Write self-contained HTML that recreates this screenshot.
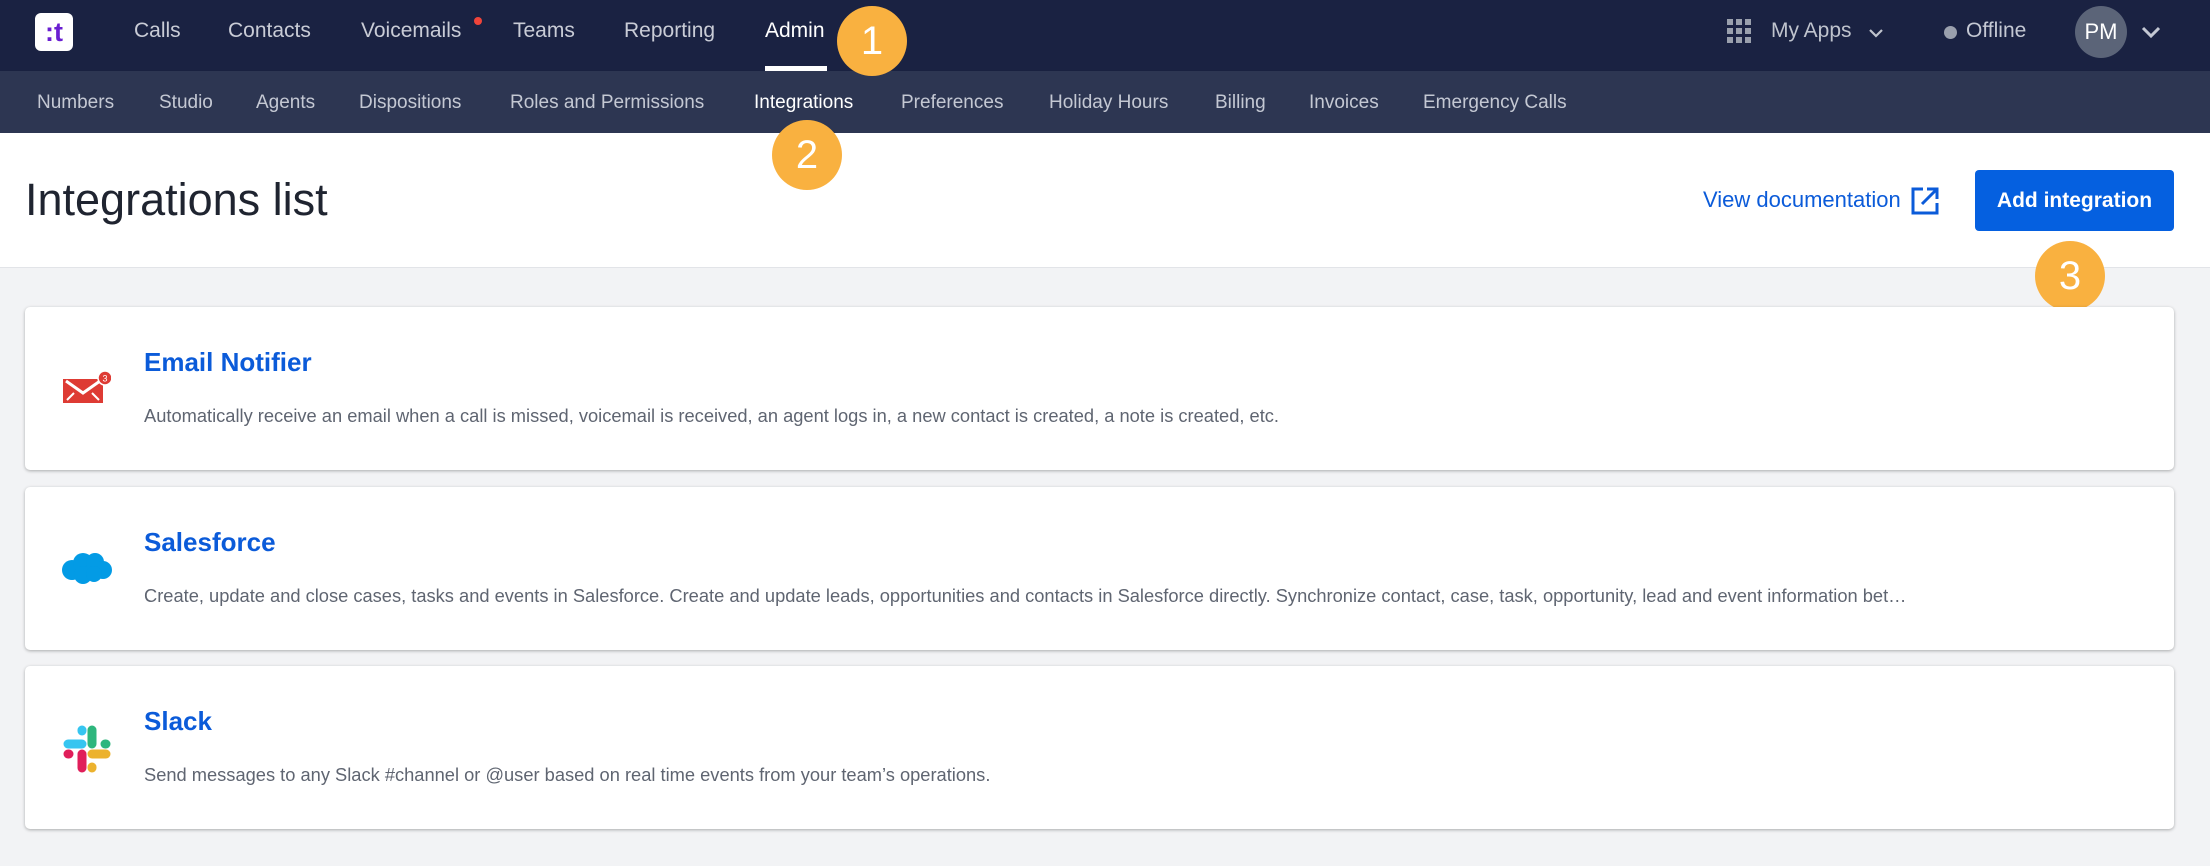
<!DOCTYPE html>
<html><head><meta charset="utf-8"><style>
*{margin:0;padding:0;box-sizing:border-box}
body{width:2210px;height:866px;overflow:hidden;background:#f2f3f5;font-family:"Liberation Sans",sans-serif;position:relative}
.abs{position:absolute;white-space:nowrap}
.top{position:absolute;left:0;top:0;width:2210px;height:71px;background:#1a2242}
.sub{position:absolute;left:0;top:71px;width:2210px;height:62px;background:#2d3652;box-shadow:0 2px 3px rgba(0,0,0,.25)}
.hdr{position:absolute;left:0;top:133px;width:2210px;height:135px;background:#fff;border-bottom:1px solid #e2e4e8}
.nav{font-size:21px;color:#c9ccd6;top:19px}
.snav{font-size:19px;color:#c4c8d3;top:92px}
.circ{position:absolute;width:70px;height:70px;border-radius:50%;background:#f9b140;color:#fff;font-size:40px;text-align:center;line-height:70px}
.card{position:absolute;left:25px;width:2149px;height:163px;background:#fff;border-radius:5px;box-shadow:0 1px 3px rgba(0,0,0,.3)}
.ct{position:absolute;left:119px;top:40px;font-size:26px;font-weight:bold;color:#0b5bd9}
.cd{position:absolute;left:119px;top:98px;font-size:18.3px;color:#5f6571;white-space:nowrap;overflow:hidden;text-overflow:ellipsis;max-width:1768px}
</style></head><body>
<div class="top"></div><div class="sub"></div><div class="hdr"></div>
<div class="abs" style="left:35px;top:13px;width:38px;height:38px;background:#fff;border-radius:6px;color:#6a1fd1;font-weight:bold;font-size:27px;text-align:center;line-height:38px">:t</div>
<div class="abs nav" style="left:134px">Calls</div>
<div class="abs nav" style="left:228px">Contacts</div>
<div class="abs nav" style="left:361px">Voicemails</div>
<div class="abs" style="left:474px;top:17px;width:8px;height:8px;border-radius:50%;background:#f0443a"></div>
<div class="abs nav" style="left:513px">Teams</div>
<div class="abs nav" style="left:624px">Reporting</div>
<div class="abs nav" style="left:765px;color:#fff">Admin</div>
<div class="abs" style="left:765px;top:66px;width:62px;height:5px;background:#fff"></div>
<div class="circ" style="left:837px;top:6px">1</div>
<svg class="abs" style="left:1727px;top:19px" width="25" height="25"><g fill="#9aa0ad"><rect x="0" y="0" width="6" height="6"/><rect x="9" y="0" width="6" height="6"/><rect x="18" y="0" width="6" height="6"/><rect x="0" y="9" width="6" height="6"/><rect x="9" y="9" width="6" height="6"/><rect x="18" y="9" width="6" height="6"/><rect x="0" y="18" width="6" height="6"/><rect x="9" y="18" width="6" height="6"/><rect x="18" y="18" width="6" height="6"/></g></svg>
<div class="abs nav" style="left:1771px;top:19px;color:#bfc3cd">My Apps</div>
<svg class="abs" style="left:1868px;top:28px" width="16" height="10"><path d="M2 2l6 6 6-6" stroke="#bfc3cd" stroke-width="2.2" fill="none"/></svg>
<div class="abs" style="left:1944px;top:26px;width:13px;height:13px;border-radius:50%;background:#9aa0ad"></div>
<div class="abs nav" style="left:1966px;color:#c4c8d3">Offline</div>
<div class="abs" style="left:2075px;top:6px;width:52px;height:52px;border-radius:50%;background:#5b6478;color:#fff;font-size:22px;text-align:center;line-height:52px">PM</div>
<svg class="abs" style="left:2141px;top:26px" width="20" height="13"><path d="M2 2l8 8 8-8" stroke="#c4c8d3" stroke-width="3" fill="none"/></svg>

<div class="abs snav" style="left:37px">Numbers</div>
<div class="abs snav" style="left:159px">Studio</div>
<div class="abs snav" style="left:256px">Agents</div>
<div class="abs snav" style="left:359px">Dispositions</div>
<div class="abs snav" style="left:510px">Roles and Permissions</div>
<div class="abs snav" style="left:754px;color:#fff">Integrations</div>
<div class="abs snav" style="left:901px">Preferences</div>
<div class="abs snav" style="left:1049px">Holiday Hours</div>
<div class="abs snav" style="left:1215px">Billing</div>
<div class="abs snav" style="left:1309px">Invoices</div>
<div class="abs snav" style="left:1423px">Emergency Calls</div>
<div class="circ" style="left:772px;top:120px">2</div>

<div class="abs" style="left:25px;top:174px;font-size:45px;color:#1f2430">Integrations list</div>
<div class="abs" style="left:1703px;top:187px;font-size:22px;color:#0b5bd9">View documentation</div>
<svg class="abs" style="left:1910px;top:186px" width="30" height="30"><path d="M13 3H3v24h24V17" stroke="#0b5bd9" stroke-width="3" fill="none"/><path d="M12 18L26 4M17 3h10v10" stroke="#0b5bd9" stroke-width="3" fill="none"/></svg>
<div class="abs" style="left:1975px;top:170px;width:199px;height:61px;background:#0560e0;border-radius:4px;color:#fff;font-size:21px;font-weight:bold;text-align:center;line-height:61px">Add integration</div>
<div class="circ" style="left:2035px;top:241px">3</div>

<div class="card" style="top:307px">
<svg class="abs" style="left:36px;top:63px" width="50" height="40"><rect x="2" y="9" width="40" height="24" fill="#de3b34"/><path d="M5 11l17 12 17-12" stroke="#fff" stroke-width="3" fill="none"/><path d="M6 30l7-7M38 30l-7-7" stroke="#fff" stroke-width="2"/><circle cx="44" cy="8" r="7" fill="#de3b34" stroke="#fff" stroke-width="1.5"/><text x="44" y="11.5" font-size="9" fill="#fff" text-anchor="middle" font-family="Liberation Sans">3</text></svg>
<div class="ct">Email Notifier</div>
<div class="cd">Automatically receive an email when a call is missed, voicemail is received, an agent logs in, a new contact is created, a note is created, etc.</div>
</div>
<div class="card" style="top:487px">
<svg class="abs" style="left:36px;top:64px" width="52" height="36"><g fill="#039be5"><circle cx="11" cy="19" r="10"/><circle cx="22" cy="12" r="10"/><circle cx="34" cy="11" r="9"/><circle cx="42" cy="19" r="9"/><circle cx="22" cy="24" r="9"/><circle cx="33" cy="23" r="8"/></g></svg>
<div class="ct">Salesforce</div>
<div class="cd">Create, update and close cases, tasks and events in Salesforce. Create and update leads, opportunities and contacts in Salesforce directly. Synchronize contact, case, task, opportunity, lead and event information between your phone system and Salesforce.</div>
</div>
<div class="card" style="top:666px">
<svg class="abs" style="left:37px;top:58px" width="50" height="50" viewBox="0 0 50 50"><g stroke-linecap="round" stroke-width="9" fill="none"><path d="M6 20h14" stroke="#36c5f0"/><path d="M20 6v1" stroke="#36c5f0"/><path d="M30 6v14" stroke="#2eb67d"/><path d="M44 20h-1" stroke="#2eb67d"/><path d="M30 30h14" stroke="#ecb22e"/><path d="M30 44v-1" stroke="#ecb22e"/><path d="M20 30v14" stroke="#e01e5a"/><path d="M6 30h1" stroke="#e01e5a"/></g></svg>
<div class="ct">Slack</div>
<div class="cd">Send messages to any Slack #channel or @user based on real time events from your team’s operations.</div>
</div>
</body></html>
